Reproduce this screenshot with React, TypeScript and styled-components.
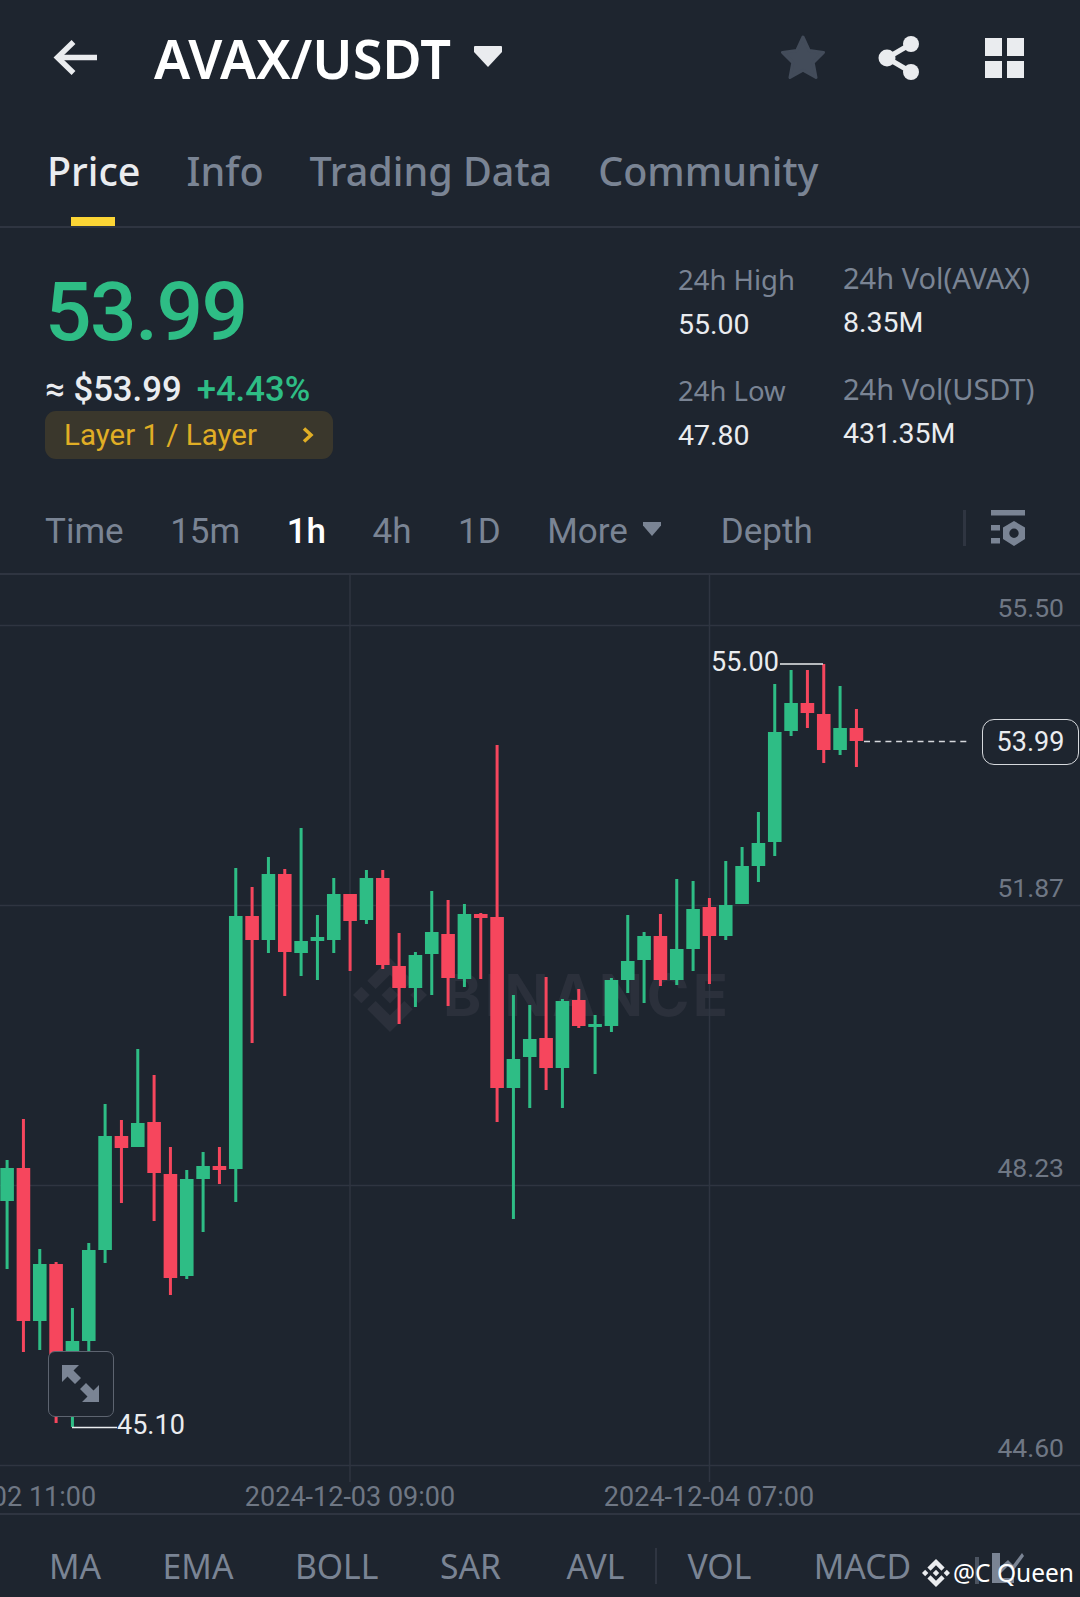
import React from "react";
import styled, { createGlobalStyle } from "styled-components";

const GREEN = "#2ebd85";
const RED = "#f6465d";
const BG = "#1e252f";
const GRID = "#2f3541";
const MUTED = "#7a8494";

const GlobalStyle = createGlobalStyle`
  html, body {
    margin: 0;
    padding: 0;
    background: ${BG};
  }
  * {
    box-sizing: border-box;
  }
`;

const Page = styled.div`
  width: 1080px;
  height: 1597px;
  overflow: hidden;
  display: flex;
  flex-direction: column;
  background: ${BG};
  color: #fff;
  font-family: "Noto Sans", Roboto, sans-serif;
`;

const Header = styled.header`
  height: 113px;
  flex: none;
  display: flex;
  align-items: center;
  padding: 3px 0 0 53px;
`;
const Title = styled.h1`
  margin: 0 0 0 57px;
  font-size: 54px;
  font-weight: 600;
  line-height: 60px;
  color: #fff;
`;
const TitleCaret = styled.svg`
  margin: 0 0 2px 23px;
`;
const HeaderIcons = styled.div`
  margin-left: auto;
  padding-right: 56px;
  display: flex;
  align-items: center;
  gap: 53px;
`;
const GridIcon = styled.svg`
  margin-left: 12px;
`;

const Tabs = styled.nav`
  height: 115px;
  flex: none;
  display: flex;
  gap: 46px;
  padding: 33px 0 0 47px;
  border-bottom: 2px solid ${GRID};
`;
const Tab = styled.div<{ $active?: boolean }>`
  position: relative;
  height: 80px;
  font-size: 39.5px;
  font-weight: 500;
  line-height: 50px;
  color: ${props => (props.$active ? "#eaecef" : MUTED)};
  ${props =>
    props.$active &&
    `&::after {
      content: "";
      position: absolute;
      left: 24px;
      bottom: 0;
      width: 44px;
      height: 9px;
      background: #fcd535;
    }`}
`;

const Summary = styled.section`
  height: 251px;
  flex: none;
  display: flex;
  justify-content: space-between;
  padding: 33px 0 0 45px;
`;
const PriceCol = styled.div`
  display: flex;
  flex-direction: column;
`;
const BigPrice = styled.div`
  font-family: Roboto, sans-serif;
  font-size: 82px;
  font-weight: 500;
  line-height: 84px;
  letter-spacing: -1.5px;
  color: ${GREEN};
  margin-top: 9px;
`;
const SubRow = styled.div`
  display: flex;
  gap: 15px;
  margin-top: 16px;
  font-family: Roboto, sans-serif;
  font-size: 34.7px;
  font-weight: 500;
  line-height: 38px;
`;
const Fiat = styled.span`
  color: #eaecef;
`;
const Change = styled.span`
  color: ${GREEN};
`;
const SectorPill = styled.div`
  width: 288px;
  height: 48px;
  margin-top: 3px;
  padding: 0 19px;
  display: flex;
  align-items: center;
  justify-content: space-between;
  border-radius: 11px;
  background: #3a372c;
  color: #e0ae25;
  font-family: Roboto, sans-serif;
  font-size: 29.5px;
`;
const StatLabel = styled.span`
  font-size: 27.5px;
  line-height: 36px;
  color: ${MUTED};
`;
const StatValue = styled.span`
  font-family: Roboto, sans-serif;
  font-size: 28.5px;
  line-height: 34px;
  color: #eaecef;
`;
const Stat = styled.div`
  display: flex;
  flex-direction: column;
  gap: 10px;
  &:nth-child(even) {
    margin-top: -2px;
    ${StatLabel} {
      font-size: 29px;
    }
  }
`;
const StatsGrid = styled.div`
  display: grid;
  grid-template-columns: 165px 237px;
  grid-auto-rows: 111px;
  align-content: start;
  padding-top: 1px;
`;

const TimeBar = styled.div`
  height: 96px;
  flex: none;
  display: flex;
  align-items: center;
  padding: 10px 55px 0 45px;
  gap: 46.5px;
  border-bottom: 2px solid ${GRID};
`;
const TimeItem = styled.span<{ $active?: boolean; $extra?: number }>`
  font-family: Roboto, sans-serif;
  font-size: 35px;
  font-weight: ${props => (props.$active ? 500 : 400)};
  color: ${props => (props.$active ? "#fff" : MUTED)};
  margin-left: ${props => props.$extra ?? 0}px;
`;
const MoreCaret = styled.svg`
  margin: 0 0 4px -31px;
`;
const BarDivider = styled.div`
  width: 3px;
  height: 36px;
  background: ${GRID};
  margin: 0 0 6px auto;
`;
const SettingsIcon = styled.svg`
  margin: 0 0 6px -21px;
`;

const ChartArea = styled.div`
  position: relative;
  height: 940px;
  flex: none;
  border-bottom: 2px solid ${GRID};
`;
const Watermark = styled.div`
  position: absolute;
  left: 353px;
  top: 383px;
  display: flex;
  align-items: center;
  gap: 16px;
  color: #2b303b;
  font-family: Inter, sans-serif;
  font-size: 58px;
  font-weight: 700;
  letter-spacing: 3.4px;
  line-height: 74px;
`;
const ChartSvg = styled.svg`
  position: absolute;
  left: 0;
  top: 0;
`;
const AxisLabel = styled.span<{ $top: number }>`
  position: absolute;
  right: 16px;
  top: ${props => props.$top}px;
  font-family: Roboto, sans-serif;
  font-size: 26.5px;
  line-height: 30px;
  color: #6f7784;
`;
const DateLabel = styled.span<{ $center: number }>`
  position: absolute;
  left: ${props => props.$center}px;
  top: 907px;
  transform: translateX(-50%);
  white-space: nowrap;
  font-family: Roboto, sans-serif;
  font-size: 27px;
  line-height: 30px;
  color: #6f7784;
`;
const ExtremeLabel = styled.span<{ $left: number; $top: number }>`
  position: absolute;
  left: ${props => props.$left}px;
  top: ${props => props.$top}px;
  font-family: Roboto, sans-serif;
  font-size: 27px;
  line-height: 30px;
  color: #eaecef;
`;
const LastPrice = styled.div`
  position: absolute;
  left: 982px;
  top: 144px;
  width: 97px;
  height: 46px;
  display: flex;
  align-items: center;
  justify-content: center;
  border: 1.5px solid #d5d8dc;
  border-radius: 12px;
  font-family: Roboto, sans-serif;
  font-size: 27px;
  color: #eaecef;
  background: ${BG};
`;
const ExpandButton = styled.div`
  position: absolute;
  left: 48px;
  top: 776px;
  width: 66px;
  height: 66px;
  display: flex;
  align-items: center;
  justify-content: center;
  border: 1.5px solid #5d6470;
  border-radius: 7px;
  background: ${BG};
`;

const BottomBar = styled.div`
  position: relative;
  flex: 1;
  display: flex;
  align-items: center;
  gap: 61.5px;
  padding: 20px 0 0 49px;
`;
const Indicator = styled.span<{ $extra?: number }>`
  font-family: "Noto Sans", sans-serif;
  font-size: 33.7px;
  color: ${MUTED};
  margin-left: ${props => props.$extra ?? 0}px;
`;
const IndicatorDivider = styled.div`
  width: 2px;
  height: 36px;
  background: ${GRID};
  margin: 0 -31px;
`;
const ChartToggle = styled.svg`
  position: absolute;
  left: 973px;
  top: 35px;
`;
const CreatorMark = styled.div`
  position: absolute;
  left: 922px;
  top: 40px;
  display: flex;
  align-items: center;
  gap: 3px;
  color: #fff;
  font-family: "Noto Sans", sans-serif;
  font-size: 24.5px;
  line-height: 36px;
  white-space: nowrap;
`;

type Candle = [number, number, number, number, 0 | 1];

// wick top, wick bottom, body top, body bottom, 1 = green
const CANDLES: Candle[] = [
  [1160, 1269, 1168, 1201, 1],
  [1119, 1352, 1168, 1321, 0],
  [1249, 1350, 1264, 1321, 1],
  [1262, 1423, 1264, 1410, 0],
  [1308, 1427, 1341, 1410, 1],
  [1243, 1352, 1250, 1341, 1],
  [1104, 1263, 1136, 1250, 1],
  [1120, 1203, 1136, 1148, 0],
  [1049, 1147, 1123, 1147, 1],
  [1075, 1221, 1122, 1173, 0],
  [1147, 1295, 1174, 1278, 0],
  [1170, 1279, 1179, 1276, 1],
  [1152, 1232, 1166, 1179, 1],
  [1147, 1184, 1166, 1170, 0],
  [868, 1202, 916, 1169, 1],
  [887, 1043, 916, 940, 0],
  [857, 953, 874, 940, 1],
  [869, 996, 874, 952, 0],
  [828, 976, 941, 953, 1],
  [915, 980, 937, 941, 1],
  [878, 953, 894, 940, 1],
  [894, 971, 894, 921, 0],
  [870, 924, 878, 920, 1],
  [870, 969, 878, 965, 0],
  [933, 1024, 966, 988, 0],
  [952, 1007, 955, 988, 1],
  [891, 995, 932, 954, 1],
  [900, 1006, 934, 978, 0],
  [904, 987, 914, 979, 1],
  [913, 979, 914, 918, 0],
  [745, 1122, 917, 1088, 0],
  [995, 1219, 1059, 1088, 1],
  [1005, 1108, 1039, 1057, 1],
  [977, 1090, 1038, 1068, 0],
  [999, 1108, 1001, 1068, 1],
  [989, 1028, 1000, 1026, 0],
  [1015, 1074, 1024, 1027, 1],
  [978, 1032, 980, 1026, 1],
  [915, 993, 961, 980, 1],
  [932, 1003, 936, 960, 1],
  [914, 986, 936, 980, 0],
  [879, 985, 949, 980, 1],
  [881, 971, 909, 949, 1],
  [898, 984, 907, 936, 0],
  [861, 940, 905, 936, 1],
  [847, 904, 866, 904, 1],
  [812, 882, 843, 866, 1],
  [684, 856, 732, 842, 1],
  [670, 736, 703, 731, 1],
  [670, 728, 703, 713, 0],
  [664, 763, 714, 750, 0],
  [686, 755, 728, 750, 1],
  [709, 767, 728, 741, 0],
];

const AXIS = [
  { text: "55.50", top: 18 },
  { text: "51.87", top: 298 },
  { text: "48.23", top: 578 },
  { text: "44.60", top: 858 },
];
const DATES = [
  { text: "2024-12-02 11:00", center: -9 },
  { text: "2024-12-03 09:00", center: 350 },
  { text: "2024-12-04 07:00", center: 709 },
];
const STATS = [
  { label: "24h High", value: "55.00" },
  { label: "24h Vol(AVAX)", value: "8.35M" },
  { label: "24h Low", value: "47.80" },
  { label: "24h Vol(USDT)", value: "431.35M" },
];

function BinanceLogo({ size, color }: { size: number; color: string }) {
  return (
    <svg width={size} height={size} viewBox="0 0 126.61 126.61" fill={color}>
      <polygon points="38.73 53.2 63.31 28.62 87.9 53.21 102.2 38.91 63.31 0 24.42 38.9 38.73 53.2" />
      <polygon points="0 63.31 14.3 49.01 28.6 63.31 14.3 77.61 0 63.31" />
      <polygon points="38.73 73.41 63.31 98 87.9 73.4 102.2 87.7 63.31 126.61 24.42 87.71 38.73 73.41" />
      <polygon points="98 63.31 112.3 49.01 126.6 63.31 112.3 77.61 98 63.31" />
      <polygon points="77.82 63.3 63.31 48.79 48.8 63.3 63.31 77.82 77.82 63.31 77.82 63.3" />
    </svg>
  );
}

function Chart() {
  return (
    <ChartSvg width={1080} height={940} viewBox="0 575 1080 940">
      {[625.5, 905.5, 1185.5, 1465.5].map(y => (
        <line key={y} x1={0} x2={1080} y1={y} y2={y} stroke={GRID} strokeWidth={1.5} />
      ))}
      {[350, 709.5].map(x => (
        <line key={x} x1={x} x2={x} y1={575} y2={1482} stroke={GRID} strokeWidth={1.5} />
      ))}
      {CANDLES.map(([wt, wb, bt, bb, up], i) => {
        const x = 7.1 + i * 16.333;
        const color = up ? GREEN : RED;
        return (
          <g key={i} fill={color}>
            <rect x={x - 1.5} y={wt} width={3} height={wb - wt} />
            <rect x={x - 6.8} y={bt} width={13.6} height={bb - bt} />
          </g>
        );
      })}
      <line x1={780} x2={823} y1={664} y2={664} stroke="#eaecef" strokeWidth={1.5} />
      <line x1={72} x2={117} y1={1427.5} y2={1427.5} stroke="#eaecef" strokeWidth={1.5} />
      <line x1={864} x2={967} y1={741.5} y2={741.5} stroke="#d5d8dc" strokeWidth={1.5} strokeDasharray="6 4.7" />
    </ChartSvg>
  );
}

export default function App() {
  return (
    <Page>
      <GlobalStyle />
      <Header>
        <svg width={44} height={36} viewBox="0 0 44 36" fill="none" stroke="#eaecef" strokeWidth={5.5}>
          <path d="M44 17.5H4" />
          <path d="M20.5 2 4.5 17.5 20.5 33" />
        </svg>
        <Title>AVAX/USDT</Title>
        <TitleCaret width={28} height={22} viewBox="0 0 28 22" fill="#eaecef">
          <path d="M1 0h26a1 1 0 0 1 1 1v5L14 21 0 6V1a1 1 0 0 1 1-1Z" />
        </TitleCaret>
        <HeaderIcons>
          <svg width={44} height={46} viewBox="0 0 44 46" fill="#434c5a" stroke="#434c5a" strokeWidth={3} strokeLinejoin="round">
            <path d="M22 2 28.3 15.6 42.5 17.4 32.2 27.6 35 42.5 22 35.3 9 42.5 11.8 27.6 1.5 17.4 15.7 15.6Z" />
          </svg>
          <svg width={42} height={46} viewBox="0 0 42 46" fill="#eaecef" stroke="#eaecef">
            <line x1={33} y1={9} x2={9} y2={23} strokeWidth={5} />
            <line x1={33} y1={37} x2={9} y2={23} strokeWidth={5} />
            <circle cx={33} cy={9} r={8} stroke="none" />
            <circle cx={33} cy={37} r={8} stroke="none" />
            <circle cx={9} cy={23} r={8.5} stroke="none" />
          </svg>
          <GridIcon width={39} height={40} viewBox="0 0 39 40" fill="#eaecef">
            <rect x={0} y={0} width={17} height={18} />
            <rect x={22} y={0} width={17} height={18} />
            <rect x={0} y={23} width={17} height={17} />
            <rect x={22} y={23} width={17} height={17} />
          </GridIcon>
        </HeaderIcons>
      </Header>

      <Tabs>
        <Tab $active>Price</Tab>
        <Tab>Info</Tab>
        <Tab>Trading Data</Tab>
        <Tab>Community</Tab>
      </Tabs>

      <Summary>
        <PriceCol>
          <BigPrice>53.99</BigPrice>
          <SubRow>
            <Fiat>≈ $53.99</Fiat>
            <Change>+4.43%</Change>
          </SubRow>
          <SectorPill>
            <span>Layer 1 / Layer</span>
            <svg width={12} height={16} viewBox="0 0 12 16" fill="none" stroke="#e0ae25" strokeWidth={3.5}>
              <path d="M2 1.5 9 8 2 14.5" />
            </svg>
          </SectorPill>
        </PriceCol>
        <StatsGrid>
          {STATS.map(stat => (
            <Stat key={stat.label}>
              <StatLabel>{stat.label}</StatLabel>
              <StatValue>{stat.value}</StatValue>
            </Stat>
          ))}
        </StatsGrid>
      </Summary>

      <TimeBar>
        <TimeItem>Time</TimeItem>
        <TimeItem>15m</TimeItem>
        <TimeItem $active>1h</TimeItem>
        <TimeItem>4h</TimeItem>
        <TimeItem>1D</TimeItem>
        <TimeItem>More</TimeItem>
        <MoreCaret width={18} height={14} viewBox="0 0 18 14" fill={MUTED}>
          <path d="M0 0h18v3.5L9 14 0 3.5Z" />
        </MoreCaret>
        <TimeItem $extra={13}>Depth</TimeItem>
        <BarDivider />
        <SettingsIcon width={34} height={36} viewBox="0 0 34 36" fill={MUTED}>
          <rect x={0} y={0} width={34} height={5.5} />
          <rect x={0} y={15} width={9} height={5.5} />
          <rect x={0} y={28} width={9} height={5.5} />
          <path fillRule="evenodd" d="M23 11 34 17.5V29L23 36 12 29V17.5ZM23 18.5a4.700 4.700 0 1 0 0 9.400 4.700 4.700 0 0 0 0-9.400Z" />
        </SettingsIcon>
      </TimeBar>

      <ChartArea>
        <Watermark>
          <BinanceLogo size={74} color="#2b303b" />
          <span>BINANCE</span>
        </Watermark>
        <Chart />
        {AXIS.map(item => (
          <AxisLabel key={item.text} $top={item.top}>
            {item.text}
          </AxisLabel>
        ))}
        {DATES.map(item => (
          <DateLabel key={item.text} $center={item.center}>
            {item.text}
          </DateLabel>
        ))}
        <ExtremeLabel $left={711} $top={72}>55.00</ExtremeLabel>
        <ExtremeLabel $left={117} $top={835}>45.10</ExtremeLabel>
        <LastPrice>53.99</LastPrice>
        <ExpandButton>
          <svg width={38} height={38} viewBox="0 0 38 38" fill={MUTED}>
            <path d="M0 0h17L11.5 5.5 19 13 13 19 5.5 11.5 0 17Z" />
            <path d="M37 37H20L25.500 31.5 18 24 24 18 31.5 25.500 37 20Z" />
          </svg>
        </ExpandButton>
      </ChartArea>

      <BottomBar>
        <Indicator>MA</Indicator>
        <Indicator>EMA</Indicator>
        <Indicator>BOLL</Indicator>
        <Indicator>SAR</Indicator>
        <Indicator $extra={4}>AVL</Indicator>
        <IndicatorDivider />
        <Indicator>VOL</Indicator>
        <Indicator $extra={1}>MACD</Indicator>
        <ChartToggle width={52} height={36} viewBox="0 0 52 36" fill={MUTED}>
          <rect x={2} y={7} width={4} height={27} opacity={0.5} />
          <rect x={19} y={3} width={8} height={30} />
          <path d="M27 17 35 10 40 15 49 3 51 6 40 21 35 16 27 24Z" />
          <rect x={27} y={28} width={14} height={5} />
        </ChartToggle>
        <CreatorMark>
          <BinanceLogo size={28} color="#eaecef" />
          <span>@C Queen</span>
        </CreatorMark>
      </BottomBar>
    </Page>
  );
}
